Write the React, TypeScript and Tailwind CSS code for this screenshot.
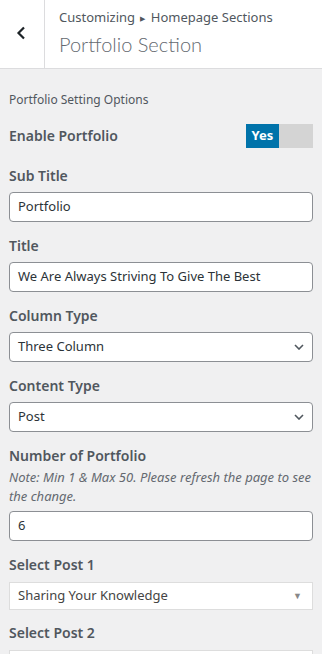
const font = { fontFamily: '"Noto Sans", "Open Sans", sans-serif' };

function Label({ children }: { children: React.ReactNode }) {
  return <div className="h-5 text-[14px] leading-5 font-semibold text-[#50575e]">{children}</div>;
}

function TextInput({ value }: { value: string }) {
  return (
    <div className="flex h-[30px] items-center rounded-[4px] border border-[#8c8f94] bg-white px-[8px] text-[13px] text-[#2c3338]">
      {value}
    </div>
  );
}

function SelectBox({ value }: { value: string }) {
  return (
    <div className="flex h-[30px] items-center justify-between rounded-[4px] border border-[#8c8f94] bg-white pl-[8px] pr-[8px] text-[13px] text-[#2c3338]">
      <span>{value}</span>
      <svg width="10" height="6" viewBox="0 0 10 6">
        <path d="M1 1l4 4 4-4" fill="none" stroke="#50575e" strokeWidth="1.6" />
      </svg>
    </div>
  );
}

function Select2({ value, arrow = true }: { value: string; arrow?: boolean }) {
  return (
    <div className="flex h-[28px] items-center justify-between border border-[#dddddd] bg-white pl-[8px] pr-[10px] text-[13px] text-[#444]">
      <span>{value}</span>
      {arrow && <span className="text-[9px] text-[#888]">▼</span>}
    </div>
  );
}

export default function App() {
  return (
    <div className="h-[654px] w-[322px] overflow-hidden bg-[#f0f0f1]" style={font}>
      <div className="flex h-[69px] border-b border-[#dcdcde] bg-white">
        <div className="flex w-[45px] items-center justify-center border-r border-[#dcdcde]">
          <svg width="10" height="14" viewBox="0 0 10 14" className="mr-[2px] -mt-[3px]">
            <path d="M8 1.5L2.5 7 8 12.5" fill="none" stroke="#1d2327" strokeWidth="2.2" />
          </svg>
        </div>
        <div className="flex flex-col pl-[14px] pt-[7px]">
          <div className="text-[13px] leading-5 text-[#50575e]">
            Customizing <span className="mx-[2px] text-[7px] align-[1px]">▶</span> Homepage Sections
          </div>
          <div
            className="mt-[1px] text-[20px] leading-7 font-light text-[#646970]"
            style={{ fontFamily: 'Lato, "Noto Sans", sans-serif' }}
          >
            Portfolio Section
          </div>
        </div>
      </div>

      <div className="px-[9px] pt-[21px]">
        <div className="h-5 text-[12px] leading-5 text-[#50575e]">Portfolio Setting Options</div>

        <div className="mt-[14px] flex h-[24px] items-center justify-between">
          <Label>Enable Portfolio</Label>
          <div className="flex h-[24px]">
            <div className="flex w-[33px] items-center justify-center bg-[#0073aa] text-[13px] font-bold text-white">Yes</div>
            <div className="w-[34px] bg-[#d4d4d4]" />
          </div>
        </div>

        <div className="mt-[18px]">
          <Label>Sub Title</Label>
          <div className="mt-[6px]">
            <TextInput value="Portfolio" />
          </div>
        </div>

        <div className="mt-[14px]">
          <Label>Title</Label>
          <div className="mt-[6px]">
            <TextInput value="We Are Always Striving To Give The Best" />
          </div>
        </div>

        <div className="mt-[14px]">
          <Label>Column Type</Label>
          <div className="mt-[6px]">
            <SelectBox value="Three Column" />
          </div>
        </div>

        <div className="mt-[14px]">
          <Label>Content Type</Label>
          <div className="mt-[6px]">
            <SelectBox value="Post" />
          </div>
        </div>

        <div className="mt-[14px]">
          <Label>Number of Portfolio</Label>
          <div className="mt-[2px] text-[13px] leading-[19px] italic text-[#646970]">
            Note: Min 1 &amp; Max 50. Please refresh the page to see the change.
          </div>
          <div className="mt-[5px]">
            <TextInput value="6" />
          </div>
        </div>

        <div className="mt-[14px]">
          <Label>Select Post 1</Label>
          <div className="mt-[7px]">
            <Select2 value="Sharing Your Knowledge" />
          </div>
        </div>

        <div className="mt-[13px]">
          <Label>Select Post 2</Label>
          <div className="mt-[7px]">
            <Select2 value="" arrow={false} />
          </div>
        </div>
      </div>
    </div>
  );
}
